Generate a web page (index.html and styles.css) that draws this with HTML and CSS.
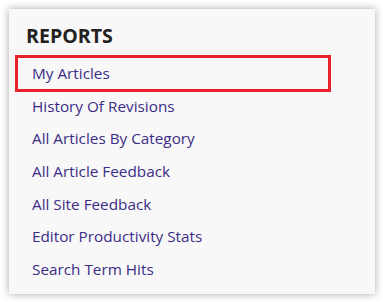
FILE: index.html
```html
<!DOCTYPE html>
<html>
<head>
<meta charset="utf-8">
<link rel="stylesheet" href="styles.css">
</head>
<body>
<div class="panel">
  <h2 class="title">REPORTS</h2>
  <ul class="links">
    <li class="row selected"><a href="#">My Articles</a></li>
    <li class="row"><a href="#">History Of Revisions</a></li>
    <li class="row"><a href="#">All Articles By Category</a></li>
    <li class="row"><a href="#">All Article Feedback</a></li>
    <li class="row"><a href="#">All Site Feedback</a></li>
    <li class="row"><a href="#">Editor Productivity Stats</a></li>
    <li class="row"><a href="#">Search Term Hits</a></li>
  </ul>
</div>
</body>
</html>
```
FILE: styles.css
```css
html, body {
  margin: 0;
  padding: 0;
  background: #ffffff;
}
body {
  padding: 9px 8px 8px 9px;
  font-family: "Open Sans", "Noto Sans", sans-serif;
}
.panel {
  width: 366px;
  height: 285px;
  box-sizing: border-box;
  background: #f8f8f8;
  box-shadow: 0 0 8px rgba(0, 0, 0, 0.35);
  padding: 14px 0 0 0;
}
.title {
  margin: 0 0 8px 17px;
  font-size: 19.6px;
  line-height: 26px;
  font-weight: 700;
  color: #222222;
}
.links {
  list-style: none;
  margin: 0;
  padding: 0;
}
.row {
  margin-left: 8px;
  width: 312px;
  height: 32.67px;
  line-height: 32.67px;
  padding-left: 15px;
  box-sizing: border-box;
  font-size: 15.3px;
}
.row a {
  color: #3b2d86;
  text-decoration: none;
}
.selected {
  outline: 3px solid #e8212b;
  outline-offset: -1px;
}
```
